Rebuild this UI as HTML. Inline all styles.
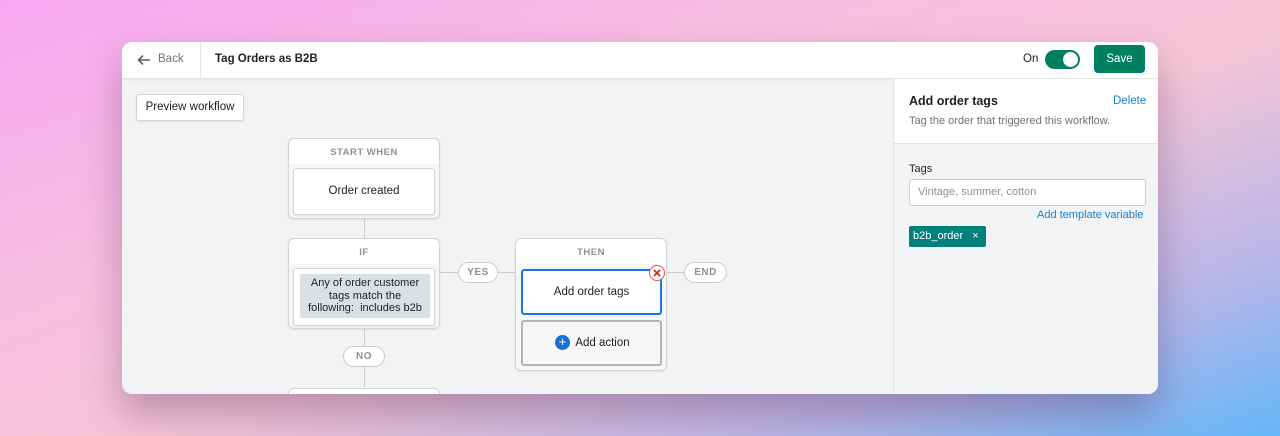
<!DOCTYPE html>
<html><head><style>
*{box-sizing:border-box;margin:0;padding:0}
body{width:1280px;height:436px;overflow:hidden;font-family:"Liberation Sans",sans-serif;position:relative;
background:linear-gradient(160deg,#f7a8f2 0%,#f9bfe0 35%,#f6c6d6 55%,#b9b6e8 80%,#64b6f8 100%);}
.abs{position:absolute}
.win{left:122px;top:42px;width:1036px;height:352px;border-radius:10px;overflow:hidden;background:#f1f3f5;box-shadow:0 20px 40px rgba(80,40,80,.35)}
.hdr{left:0;top:0;width:1036px;height:37px;background:#fff;border-bottom:1px solid #e1e3e5;box-shadow:0 1px 3px rgba(0,0,0,.06)}
.t{font-size:11.5px;color:#202223;white-space:nowrap}
.card{background:#fff;border:1px solid #d2d5d8;border-radius:6px;box-shadow:0 1px 2px rgba(0,0,0,.08)}
.head{font-size:9.5px;font-weight:bold;color:#8c9196;letter-spacing:.5px;text-align:center;width:100%}
.pill{background:#fff;border:1px solid #c9cccf;border-radius:11px;font-size:10px;font-weight:bold;color:#8c9196;text-align:center;line-height:19px;letter-spacing:.5px}
.line{background:#c9cccf}
</style></head><body>
<div class="abs win">
 <div class="abs hdr">
  <svg class="abs" style="left:15px;top:12px" width="14" height="12" viewBox="0 0 14 12"><path d="M13 6H2M6 1.5L1.5 6 6 10.5" stroke="#5c5f62" stroke-width="1.6" fill="none"/></svg>
  <div class="abs t" style="left:36px;top:11px;color:#6d7175">Back</div>
  <div class="abs" style="left:78px;top:0;width:1px;height:37px;background:#e1e3e5"></div>
  <div class="abs t" style="left:93px;top:11px;font-weight:bold">Tag Orders as B2B</div>
  <div class="abs t" style="left:901px;top:11px;color:#202223">On</div>
  <div class="abs" style="left:923px;top:8px;width:35px;height:19px;border-radius:10px;background:#007f5f"><div class="abs" style="left:18px;top:2px;width:15px;height:15px;border-radius:50%;background:#fff"></div></div>
  <div class="abs" style="left:972px;top:3px;width:51px;height:28px;border-radius:4px;background:#008060;color:#fff;font-size:11.5px;text-align:center;line-height:28px">Save</div>
 </div>
 <div class="abs card t" style="left:14px;top:52px;width:108px;height:27px;border-radius:3px;line-height:25px;text-align:center">Preview workflow</div>

 <div class="abs line" style="left:242px;top:177px;width:1px;height:20px"></div>
 <div class="abs line" style="left:242px;top:287px;width:1px;height:70px"></div>
 <div class="abs line" style="left:318px;top:230px;width:244px;height:1px"></div>

 <div class="abs card" style="left:166px;top:96px;width:152px;height:81px;background:#f6f6f7">
  <div class="abs" style="left:0;top:0;width:150px;height:25px;background:#fff;border-radius:6px 6px 0 0"></div>
  <div class="abs head" style="top:8px">START WHEN</div>
  <div class="abs card t" style="left:4px;top:29px;width:142px;height:47px;border-radius:3px;line-height:45px;text-align:center">Order created</div>
 </div>
 <div class="abs card" style="left:166px;top:196px;width:152px;height:91px;background:#f6f6f7">
  <div class="abs" style="left:0;top:0;width:150px;height:25px;background:#fff;border-radius:6px 6px 0 0"></div>
  <div class="abs head" style="top:8px">IF</div>
  <div class="abs card" style="left:4px;top:29px;width:142px;height:58px;border-radius:3px"></div>
  <div class="abs t" style="left:11px;top:35px;width:130px;height:44px;background:#dde0e2;border-radius:2px;text-align:center;font-size:11px;line-height:12.5px;padding-top:3px">Any of order customer<br>tags match the<br>following:&nbsp; includes b2b</div>
 </div>
 <div class="abs card" style="left:166px;top:346px;width:152px;height:30px"></div>
 <div class="abs pill" style="left:336px;top:220px;width:40px;height:21px">YES</div>
 <div class="abs pill" style="left:221px;top:304px;width:42px;height:21px">NO</div>

 <div class="abs card" style="left:393px;top:196px;width:152px;height:133px;background:#f6f6f7">
  <div class="abs" style="left:0;top:0;width:150px;height:25px;background:#fff;border-radius:6px 6px 0 0"></div>
  <div class="abs head" style="top:8px">THEN</div>
  <div class="abs t" style="left:5px;top:30px;width:141px;height:46px;background:#fff;border:2px solid #1a73e8;border-radius:3px;line-height:42px;text-align:center">Add order tags</div>
  <div class="abs t" style="left:5px;top:81px;width:141px;height:46px;background:#f6f6f7;border:2px solid #aeb4b9;border-radius:3px;line-height:42px;text-align:center;padding-left:22px">Add action</div>
  <div class="abs" style="left:39px;top:96px;width:15px;height:15px;border-radius:50%;background:#1870d1;color:#fff;font-size:13px;line-height:14px;text-align:center">+</div>
 </div>
 <div class="abs" style="left:527px;top:223px;width:16px;height:16px;border-radius:50%;background:#fff;border:1.5px solid #e3515a"><svg class="abs" style="left:3px;top:3px" width="8" height="8" viewBox="0 0 8 8"><path d="M1 1L7 7M7 1L1 7" stroke="#d72c0d" stroke-width="1.8"/></svg></div>
 <div class="abs pill" style="left:562px;top:220px;width:43px;height:21px">END</div>

 <div class="abs" style="left:771px;top:37px;width:265px;height:315px;background:#f1f3f5;border-left:1px solid #e1e3e5">
  <div class="abs" style="left:0;top:0;width:265px;height:65px;background:#fff;border-bottom:1px solid #e1e3e5"></div>
  <div class="abs t" style="left:15px;top:15px;font-size:12.5px;font-weight:bold">Add order tags</div>
  <div class="abs t" style="left:219px;top:16px;color:#1a7fc9">Delete</div>
  <div class="abs t" style="left:15px;top:36px;font-size:11px;color:#6d7175">Tag the order that triggered this workflow.</div>
  <div class="abs t" style="left:15px;top:84px;font-size:11px">Tags</div>
  <div class="abs t" style="left:15px;top:100px;width:237px;height:27px;background:#fff;border:1px solid #c9cccf;border-radius:3px;padding-left:8px;line-height:25px;font-size:11px;color:#8c9196">Vintage, summer, cotton</div>
  <div class="abs t" style="left:143px;top:130px;font-size:11px;color:#1a7fc9">Add template variable</div>
  <div class="abs t" style="left:15px;top:147px;width:77px;height:21px;background:#00807d;border-radius:2px;color:#fff;line-height:21px;padding-left:4px;font-size:11px">b2b_order <span style="margin-left:6px">×</span></div>
 </div>
</div>
</body></html>
